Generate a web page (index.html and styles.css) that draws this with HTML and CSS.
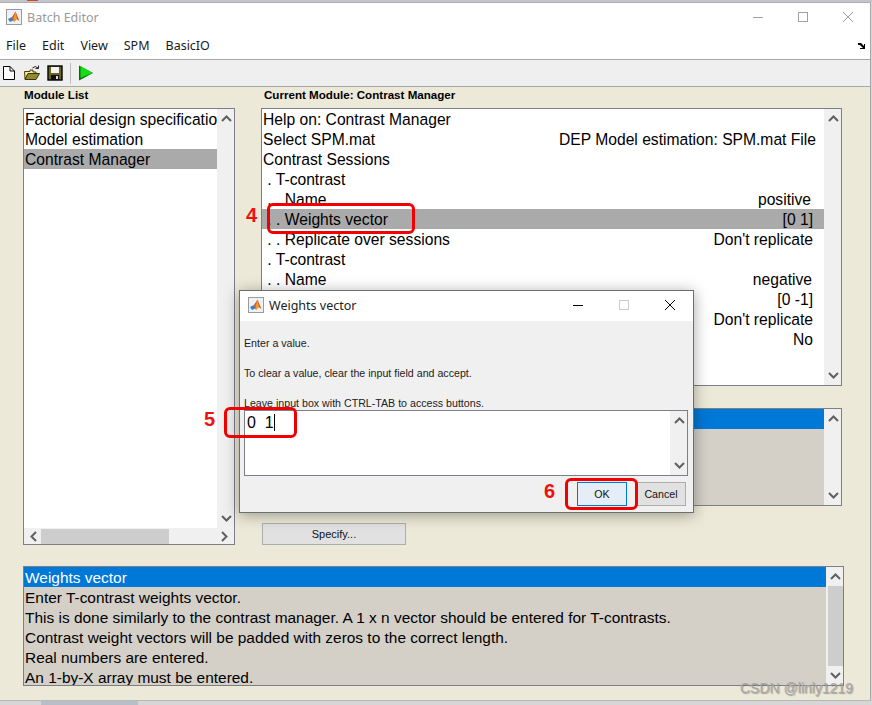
FILE: index.html
```html
<!DOCTYPE html>
<html lang="en">
<head>
    <meta charset="UTF-8">
    <title>Batch Editor</title>
    <link rel="stylesheet" href="styles.css">
</head>
<body>
    <svg class="defs" width="0" height="0">
        <symbol id="up" viewBox="0 0 11 7"><path d="M1 6 L5.5 1.5 L10 6" fill="none" stroke="#606060" stroke-width="2"/></symbol>
        <symbol id="down" viewBox="0 0 11 7"><path d="M1 1 L5.5 5.5 L10 1" fill="none" stroke="#606060" stroke-width="2"/></symbol>
        <symbol id="left" viewBox="0 0 7 11"><path d="M6 1 L1.5 5.5 L6 10" fill="none" stroke="#606060" stroke-width="2"/></symbol>
        <symbol id="right" viewBox="0 0 7 11"><path d="M1 1 L5.5 5.5 L1 10" fill="none" stroke="#606060" stroke-width="2"/></symbol>
        <symbol id="matlab" viewBox="0 0 16 16">
            <rect x="0.5" y="0.5" width="15" height="15" fill="#eef2f6" stroke="#9a9a9a"/>
            <path d="M2 10 L6 8 L8 11 L4 13 Z" fill="#3f7fc4"/>
            <path d="M6 8 L9.5 2.5 L13.5 12 L10.5 10 L8 13 Z" fill="#d9541e"/>
            <path d="M9.5 2.5 L11 10 L8 13 L7.5 9 Z" fill="#f09a2a"/>
        </symbol>
    </svg>

    <div class="top-strip"><span class="red-bit"></span></div>
    <div class="window">
        <div class="titlebar">
            <svg class="app-icon"><use href="#matlab"/></svg>
            <span class="title">Batch Editor</span>
            <div class="win-buttons">
                <svg class="win-btn" viewBox="0 0 12 12"><path d="M1 6.5 H11" stroke="#a0a0a0"/></svg>
                <svg class="win-btn" viewBox="0 0 12 12"><rect x="1.5" y="1.5" width="9" height="9" fill="none" stroke="#a0a0a0"/></svg>
                <svg class="win-btn" viewBox="0 0 12 12"><path d="M1 1 L11 11 M11 1 L1 11" stroke="#a0a0a0"/></svg>
            </div>
        </div>
        <div class="menubar">
            <span>File</span><span>Edit</span><span>View</span><span>SPM</span><span>BasicIO</span>
            <svg class="dock-arrow" viewBox="0 0 8 7"><path d="M0 0 H3 L6 3 V1 H7 V6 H2 V5 H5 L2 2 H0 Z" fill="#000"/></svg>
        </div>
        <div class="toolbar">
            <svg class="tool" viewBox="0 0 16 16"><path d="M2.5 1.5 H9 L13.5 6 V14.5 H2.5 Z" fill="#fff" stroke="#000"/><path d="M9 1.5 V6 H13.5" fill="none" stroke="#000"/></svg>
            <svg class="tool" viewBox="0 0 16 16"><path d="M0.5 6.5 H6 V5 H9 V7 H12 V9 H4 L1 14 Z" fill="#f6e9a0" stroke="#4a4000"/><path d="M1 14.5 L4 8.5 H15.5 L12 14.5 Z" fill="#8f8a2e" stroke="#3a3400"/><path d="M8.5 3 Q11.5 0 14 3 M14.5 0.5 V3.5 H11.5" fill="none" stroke="#222"/></svg>
            <svg class="tool" viewBox="0 0 16 16"><rect x="1" y="1" width="14" height="14" fill="#6b6520" stroke="#000" stroke-width="1.4"/><rect x="4" y="2" width="8" height="6" fill="#f4f4f4"/><rect x="4" y="10" width="8" height="5" fill="#111"/><rect x="9" y="11" width="2" height="3" fill="#ddd"/></svg>
            <span class="tool-sep"></span>
            <svg class="tool" viewBox="0 0 16 16"><path d="M1 0.5 L15 8 L1 15.5 Z" fill="#0a6a0a"/><path d="M2.5 1 L14.5 8 L2.5 13 Z" fill="#12e012"/></svg>
        </div>

        <div class="content">
            <div class="columns">
                <div class="col-left">
                    <div class="label">Module List</div>
                    <div class="box module-box">
                        <div class="module-main">
                            <div class="list">
                                <div class="row">Factorial design specification</div>
                                <div class="row">Model estimation</div>
                                <div class="row selected">Contrast Manager</div>
                            </div>
                            <div class="vscroll">
                                <svg class="arrow"><use href="#up"/></svg>
                                <span class="track"></span>
                                <svg class="arrow"><use href="#down"/></svg>
                            </div>
                        </div>
                        <div class="hscroll">
                            <svg class="arrow-h"><use href="#left"/></svg>
                            <span class="hthumb"></span>
                            <span class="track"></span>
                            <svg class="arrow-h"><use href="#right"/></svg>
                        </div>
                    </div>
                </div>
                <div class="col-right">
                    <div class="label label-current">Current Module: Contrast Manager</div>
                    <div class="box current-box">
                        <div class="list">
                            <div class="row">Help on: Contrast Manager</div>
                            <div class="row split"><span>Select SPM.mat</span><span class="val-dep">DEP Model estimation: SPM.mat File</span></div>
                            <div class="row">Contrast Sessions</div>
                            <div class="row">&nbsp;. T-contrast</div>
                            <div class="row split"><span>&nbsp;. . Name</span><span class="val-pos">positive</span></div>
                            <div class="row split selected"><span>&nbsp;. . Weights vector</span><span>[0 1]</span></div>
                            <div class="row split"><span>&nbsp;. . Replicate over sessions</span><span>Don't replicate</span></div>
                            <div class="row">&nbsp;. T-contrast</div>
                            <div class="row split"><span>&nbsp;. . Name</span><span class="val-neg">negative</span></div>
                            <div class="row split"><span>&nbsp;. . Weights vector</span><span>[0 -1]</span></div>
                            <div class="row split"><span>&nbsp;. . Replicate over sessions</span><span>Don't replicate</span></div>
                            <div class="row split"><span>Delete existing contrasts</span><span>No</span></div>
                        </div>
                        <div class="vscroll">
                            <svg class="arrow"><use href="#up"/></svg>
                            <span class="track"></span>
                            <svg class="arrow"><use href="#down"/></svg>
                        </div>
                    </div>
                    <div class="box values-box">
                        <div class="list grey">
                            <div class="row blue">&nbsp;</div>
                        </div>
                        <div class="vscroll">
                            <svg class="arrow"><use href="#up"/></svg>
                            <span class="track"></span>
                            <svg class="arrow"><use href="#down"/></svg>
                        </div>
                    </div>
                    <div class="specify">Specify...</div>
                </div>
            </div>

            <div class="box help-box">
                <div class="list grey">
                    <div class="row blue">Weights vector</div>
                    <div class="row">Enter T-contrast weights vector.</div>
                    <div class="row">This is done similarly to the contrast manager. A 1 x n vector should be entered for T-contrasts.</div>
                    <div class="row">Contrast weight vectors will be padded with zeros to the correct length.</div>
                    <div class="row">Real numbers are entered.</div>
                    <div class="row">An 1-by-X array must be entered.</div>
                </div>
                <div class="vscroll">
                    <svg class="arrow"><use href="#up"/></svg>
                    <span class="thumb"></span>
                    <svg class="arrow"><use href="#down"/></svg>
                </div>
            </div>
        </div>
    </div>
    <div class="bottom-strip"><span class="task-bit"></span></div>

    <!-- dialog -->
    <div class="dialog">
        <div class="dlg-title">
            <svg class="app-icon"><use href="#matlab"/></svg>
            <span class="dlg-name">Weights vector</span>
            <div class="win-buttons dlg-buttons">
                <svg class="win-btn" viewBox="0 0 12 12"><path d="M1 6.5 H11" stroke="#000"/></svg>
                <svg class="win-btn" viewBox="0 0 12 12"><rect x="1.5" y="1.5" width="9" height="9" fill="none" stroke="#ccc"/></svg>
                <svg class="win-btn" viewBox="0 0 12 12"><path d="M1 1 L11 11 M11 1 L1 11" stroke="#000"/></svg>
            </div>
        </div>
        <div class="dlg-body">
            <div class="dlg-msg">
                <p>Enter a value.</p>
                <p>To clear a value, clear the input field and accept.</p>
                <p>Leave input box with CTRL-TAB to access buttons.</p>
            </div>
            <div class="dlg-input">
                <div class="dlg-text">0&nbsp;&nbsp;1<span class="caret"></span></div>
                <div class="vscroll">
                    <svg class="arrow"><use href="#up"/></svg>
                    <span class="track"></span>
                    <svg class="arrow"><use href="#down"/></svg>
                </div>
            </div>
            <div class="dlg-actions">
                <button class="btn ok">OK</button>
                <button class="btn">Cancel</button>
            </div>
        </div>
    </div>

    <!-- annotations -->
    <div class="mark mark-4"></div>
    <div class="mark mark-5"></div>
    <div class="mark mark-6"></div>
    <span class="num num-4">4</span>
    <span class="num num-5">5</span>
    <span class="num num-6">6</span>
    <span class="watermark">CSDN @linly1219</span>
</body>
</html>
```

FILE: styles.css
```css
html, body {
    margin: 0;
    padding: 0;
    height: 705px;
    overflow: hidden;
}
body {
    position: relative;
    background: #d6d6d6;
    font-family: "Liberation Sans", Arial, sans-serif;
    color: #000;
}
.defs {
    position: absolute;
}
.top-strip {
    height: 2px;
    background: #c4c4cc;
    position: relative;
}
.red-bit {
    position: absolute;
    left: 27px;
    top: 0;
    width: 11px;
    height: 1px;
    background: #d8432a;
}
.window {
    height: 699px;
    width: 871px;
    background: #fff;
    display: flex;
    flex-direction: column;
    border-right: 1px solid #a8a8a8;
    border-top: 1px solid #b0b0b0;
    border-bottom: 1px solid #b8b8b8;
    box-sizing: border-box;
}
.titlebar {
    height: 28px;
    display: flex;
    align-items: center;
    padding-left: 6px;
    flex-shrink: 0;
}
.app-icon {
    width: 16px;
    height: 16px;
    flex-shrink: 0;
}
.title {
    margin-left: 5px;
    font: 12.5px "Noto Sans", sans-serif;
    color: #999;
}
.win-buttons {
    margin-left: auto;
    display: flex;
    gap: 33px;
    padding-right: 16px;
}
.win-btn {
    width: 12px;
    height: 12px;
}
.menubar {
    height: 29px;
    display: flex;
    align-items: center;
    gap: 16px;
    padding-left: 6px;
    font: 12.5px "Noto Sans", sans-serif;
    color: #1a1a1a;
    position: relative;
    border-bottom: 1px solid #a6a6a6;
    flex-shrink: 0;
    box-sizing: border-box;
}
.dock-arrow {
    position: absolute;
    right: 4px;
    top: 12px;
    width: 8px;
    height: 7px;
}
.toolbar {
    height: 27px;
    background: #efefef;
    border-bottom: 1px solid #a6a6a6;
    display: flex;
    align-items: center;
    padding-left: 1px;
    gap: 7px;
    flex-shrink: 0;
    box-sizing: border-box;
}
.tool {
    width: 16px;
    height: 16px;
}
.tool-sep {
    width: 1px;
    height: 21px;
    background: #bcbcbc;
}
.content {
    flex: 1;
    background: #ece9d8;
    padding: 2px 28px 0 23px;
    display: flex;
    flex-direction: column;
    min-height: 0;
}
.columns {
    display: flex;
    gap: 26px;
}
.col-left {
    width: 212px;
}
.col-right {
    width: 583px;
}
.label {
    height: 19px;
    line-height: 12px;
    padding-left: 1px;
    font-size: 11.6px;
    font-weight: bold;
    box-sizing: border-box;
}
.label-current {
    padding-left: 3px;
}
.box {
    border: 1px solid #7c7f88;
    background: #fff;
    display: flex;
    box-sizing: border-box;
}
.module-box {
    height: 437px;
    flex-direction: column;
}
.module-main {
    display: flex;
    flex: 1;
    min-height: 0;
}
.current-box {
    height: 278px;
}
.values-box {
    height: 98px;
    margin-top: 22px;
}
.help-box {
    height: 120px;
    width: 821px;
    margin-top: 21px;
}
.list {
    flex: 1;
    min-width: 0;
    overflow: hidden;
}
.grey {
    background: #d4d0c8;
}
.row {
    height: 20px;
    line-height: 22px;
    font-size: 15.65px;
    padding-left: 1px;
    white-space: nowrap;
    overflow: hidden;
}
.help-box .row {
    font-size: 15.45px;
}
.split {
    display: flex;
    justify-content: space-between;
    padding-right: 11px;
}
.val-dep {
    margin-right: -3px;
}
.val-pos {
    margin-right: 2px;
}
.val-neg {
    margin-right: 1px;
}
.selected {
    background: #aaaaaa;
}
.blue {
    background: #0078d7;
    color: #fff;
}
.vscroll {
    width: 17px;
    padding-left: 1px;
    box-sizing: border-box;
    background: #f0f0f0;
    display: flex;
    flex-direction: column;
    align-items: center;
    flex-shrink: 0;
}
.arrow {
    width: 11px;
    height: 7px;
    margin: 6px 0;
    flex-shrink: 0;
}
.track {
    flex: 1;
}
.thumb {
    width: 15px;
    flex: 1;
    background: #cdcdcd;
}
.hscroll {
    height: 16px;
    background: #f0f0f0;
    display: flex;
    align-items: center;
    flex-shrink: 0;
}
.arrow-h {
    width: 7px;
    height: 11px;
    margin: 0 6px;
    flex-shrink: 0;
}
.hthumb {
    width: 128px;
    height: 15px;
    margin-left: -2px;
    background: #cdcdcd;
}
.specify {
    width: 144px;
    height: 22px;
    margin: 17px 0 0 1px;
    background: #e1e1e1;
    border: 1px solid #adadad;
    box-sizing: border-box;
    text-align: center;
    font-size: 11px;
    line-height: 20px;
    color: #111;
}
.bottom-strip {
    height: 4px;
    position: relative;
}
.task-bit {
    position: absolute;
    left: 41px;
    top: 0;
    width: 97px;
    height: 4px;
    background: #b6bec6;
}
.dialog {
    position: absolute;
    left: 239px;
    top: 290px;
    width: 455px;
    height: 223px;
    border: 1px solid #6e6e6e;
    box-sizing: border-box;
    background: #f0f0f0;
    box-shadow: 0 2px 14px rgba(0, 0, 0, 0.35);
    display: flex;
    flex-direction: column;
}
.dlg-title {
    height: 30px;
    background: #fff;
    display: flex;
    align-items: center;
    padding: 0 0 2px 8px;
    box-sizing: border-box;
    flex-shrink: 0;
}
.dlg-name {
    margin-left: 5px;
    font: 12.5px "Noto Sans", sans-serif;
    color: #222;
}
.dlg-buttons {
    gap: 34px;
    padding-right: 17px;
}
.dlg-body {
    flex: 1;
    padding: 0 5px 0 4px;
    display: flex;
    flex-direction: column;
}
.dlg-msg {
    height: 89px;
    overflow: hidden;
    font-size: 10.65px;
    line-height: 15px;
    color: #222;
    padding-top: 15px;
    box-sizing: border-box;
}
.dlg-msg p {
    margin: 0 0 15px;
}
.dlg-input {
    height: 66px;
    width: 444px;
    border: 1px solid #7c7f88;
    box-sizing: border-box;
    background: #fff;
    display: flex;
}
.dlg-text {
    flex: 1;
    font-size: 16px;
    line-height: 20px;
    padding: 2px 0 0 2px;
}
.caret {
    display: inline-block;
    width: 1px;
    height: 17px;
    background: #000;
    vertical-align: -3px;
}
.dlg-actions {
    display: flex;
    justify-content: flex-end;
    gap: 9px;
    margin-top: 6px;
    padding-right: 2px;
}
.btn {
    width: 50px;
    height: 24px;
    padding: 0;
    background: #e1e1e1;
    border: 1px solid #adadad;
    font: 10.65px "Liberation Sans", sans-serif;
    color: #111;
}
.ok {
    background: #e5eef7;
    border-color: #0078d7;
}
.mark {
    position: absolute;
    border: 3px solid #f00000;
    border-radius: 6px;
    box-sizing: border-box;
}
.mark-4 {
    left: 267px;
    top: 203px;
    width: 148px;
    height: 31px;
}
.mark-5 {
    left: 224px;
    top: 407px;
    width: 73px;
    height: 31px;
}
.mark-6 {
    left: 565px;
    top: 478px;
    width: 73px;
    height: 32px;
}
.num {
    position: absolute;
    color: #f01010;
    font-size: 20px;
    font-weight: bold;
    line-height: 20px;
}
.num-4 {
    left: 246px;
    top: 205px;
}
.num-5 {
    left: 204px;
    top: 409px;
}
.num-6 {
    left: 544px;
    top: 481px;
}
.watermark {
    position: absolute;
    left: 740px;
    top: 680px;
    font-size: 14px;
    line-height: 16px;
    color: #a8a8a8;
    text-shadow: 1px 1px 1px rgba(90, 90, 90, 0.5);
}
```
